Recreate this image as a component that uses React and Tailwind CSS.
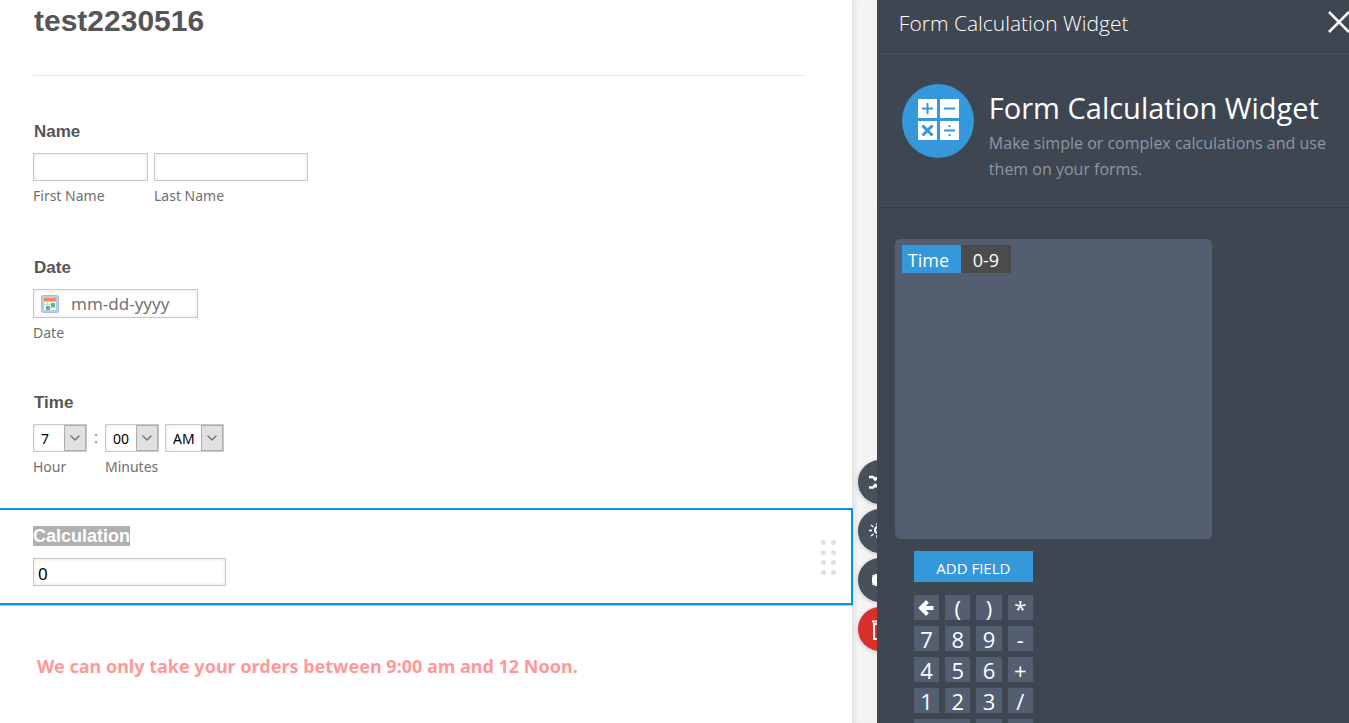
import React from "react";
import { ChevronDown } from "lucide-react";

const box = "border border-[#c8c8c8] bg-white shadow-[inset_0_0_4px_#0000001a] outline-none";

function SubLabel({ htmlFor, children }) {
  return (
    <label htmlFor={htmlFor} className="mt-1.5 block font-['Noto_Sans',sans-serif] text-[14px] leading-[18px] text-[#6f6f6f]">
      {children}
    </label>
  );
}

function Heading({ children }) {
  return <h2 className="mb-2.5 pl-px text-[17px] leading-[22px] font-bold text-[#555]">{children}</h2>;
}

function Picker({ id, width, label, value, options }) {
  return (
    <div className={`relative ${width}`}>
      <select
        id={id}
        aria-label={label}
        defaultValue={value}
        className={`h-7 w-full appearance-none pl-[7px] font-['Noto_Sans',sans-serif] text-[14px] text-black ${box}`}
      >
        {options.map((o) => (
          <option key={o}>{o}</option>
        ))}
      </select>
      <span className="pointer-events-none absolute inset-y-px right-px flex w-[22px] items-center justify-center border border-[#adadad] bg-[#e1e1e1]">
        <ChevronDown size={16} strokeWidth={2} color="#707070" />
      </span>
    </div>
  );
}

function CalendarIcon() {
  return (
    <svg width="18" height="18" viewBox="0 0 18 18" aria-hidden="true">
      <rect x="0.5" y="0.5" width="17" height="17" rx="1.5" fill="#b5cdee" stroke="#a3bfe8" />
      <rect x="3" y="3" width="12" height="12" fill="#fff" />
      <path d="M3 9.500h12M3 12.500h12M6.500 6v9M10.500 6v9" stroke="#c5d6ee" />
      <rect x="3" y="3" width="12" height="3.500" fill="#f58a4b" />
      <rect x="10" y="8" width="4" height="4" fill="#6cb56c" />
      <rect x="5" y="11" width="4" height="4" fill="#6cb56c" />
    </svg>
  );
}

function Tool({ label, color, children }) {
  return (
    <button aria-label={label} className={`flex size-11 shrink-0 items-center justify-center rounded-full shadow-[0_1px_4px_#0003] ${color}`}>
      <svg width="22" height="22" viewBox="0 0 22 22" fill="none" stroke="#fff" strokeWidth="2.5" aria-hidden="true">
        {children}
      </svg>
    </button>
  );
}

function Logo() {
  return (
    <svg className="h-[74px] w-[72px] shrink-0" viewBox="0 0 72 74" aria-hidden="true">
      <ellipse cx="36" cy="37" rx="36" ry="37" fill="#3498db" />
      <path d="M16 15h19v19H16zM38 15h19v19H38zM16 37h19v19H16zM38 37h19v19H38z" fill="#fff" />
      <path d="M20 24.500h11M25.500 19v11M42 24.500h11M42 46.500h11" stroke="#3498db" strokeWidth="2" />
      <path d="M20.500 41.500l10 10M30.500 41.500l-10 10" stroke="#3498db" strokeWidth="3" />
      <path d="M46.500 41h2v2h-2zM46.500 50h2v2h-2z" fill="#3498db" />
    </svg>
  );
}

const keys = ["(", ")", "*", "7", "8", "9", "-", "4", "5", "6", "+", "1", "2", "3", "/"];
const keyClass = "flex h-[25px] items-center justify-center bg-[#535e70] pt-px text-[22px] leading-none text-white";

export default function App() {
  return (
    <div className="flex h-screen overflow-hidden bg-white font-['Liberation_Sans',Arial,sans-serif]">
      <main className="relative z-10 min-w-0 flex-1 bg-white">
        <header className="mr-[47px] ml-[33px] border-b border-[#e3e3e3] pt-1 pb-[37px]">
          <h1 className="pl-px text-[30px] leading-[34px] font-bold text-[#555]">test2230516</h1>
        </header>

        <section className="mt-[45px] ml-[33px]">
          <Heading>Name</Heading>
          <div className="flex gap-1.5">
            <div>
              <input id="first" className={`block h-7 w-[115px] px-1 ${box}`} />
              <SubLabel htmlFor="first">First Name</SubLabel>
            </div>
            <div>
              <input id="last" className={`block h-7 w-[154px] px-1 ${box}`} />
              <SubLabel htmlFor="last">Last Name</SubLabel>
            </div>
          </div>
        </section>

        <section className="mt-[52px] ml-[33px]">
          <Heading>Date</Heading>
          <div className={`flex h-[29px] w-[165px] items-center gap-3 pl-[7px] ${box}`}>
            <CalendarIcon />
            <input
              id="date"
              placeholder="mm-dd-yyyy"
              className="w-[115px] bg-transparent font-['Noto_Sans',sans-serif] text-[17px] leading-5 outline-none placeholder:text-[#757575]"
            />
          </div>
          <SubLabel htmlFor="date">Date</SubLabel>
        </section>

        <section className="mt-[50px] ml-[33px]">
          <Heading>Time</Heading>
          <div className="flex">
            <div>
              <Picker id="hour" width="w-[54px]" value="7" options={["7"]} />
              <SubLabel htmlFor="hour">Hour</SubLabel>
            </div>
            <span className="w-[18px] text-center text-[16px] leading-7 text-[#6f6f6f]">:</span>
            <div>
              <Picker id="minutes" width="w-[54px]" value="00" options={["00"]} />
              <SubLabel htmlFor="minutes">Minutes</SubLabel>
            </div>
            <div className="ml-1.5">
              <Picker id="period" label="AM or PM" width="w-[59px]" value="AM" options={["AM", "PM"]} />
            </div>
          </div>
        </section>

        <section className="mt-8 flex items-center justify-between border-y-2 border-r-2 border-[#0095de] pt-4 pb-[17px] pl-[33px] shadow-[0_1px_0_#0095de66] -mr-px pr-[15px]">
          <div>
            <label htmlFor="calc" className="block w-fit bg-[#b0b0b0] text-[18px] leading-5 font-bold text-white">
              Calculation
            </label>
            <input id="calc" defaultValue="0" className={`mt-3 block h-7 w-[193px] px-1 pt-0.5 font-['Noto_Sans',sans-serif] text-[17px] text-black ${box}`} />
          </div>
          <div className="mt-0.5 grid grid-cols-2 gap-[5px]">
            {Array.from({ length: 8 }, (_, i) => (
              <span key={i} className="size-[5px] rounded-full bg-[#e0e0e0]" />
            ))}
          </div>
        </section>

        <p className="mt-[51px] ml-[37px] font-['Noto_Sans',sans-serif] text-[18px] leading-5 font-bold whitespace-nowrap text-[#ff9999]">
          We can only take your orders between 9:00 am and 12 Noon.
        </p>
      </main>

      <div className="flex w-[25px] shrink-0 flex-col gap-[5px] overflow-hidden bg-[#f4f4f4] pt-[460px] pl-1.5 shadow-[inset_5px_0_5px_-3px_#0000001a]">
        <Tool label="Conditions" color="bg-[#47515b]">
          <path d="M0 6h4l3 3.500M0 16.500h4l3-3.500M7 6v3M7 13.500v3" />
        </Tool>
        <Tool label="Wizard" color="bg-[#47515b]">
          <circle cx="9" cy="10" r="3" strokeWidth="2" />
          <path d="M0 10.500h3M2 5l2.500 2M2 16l2.500-2M8 3v2.500M8 15v3" strokeWidth="1.5" />
        </Tool>
        <Tool label="Settings" color="bg-[#47515b]">
          <path d="M7 5v12M3 9.500h4M3 12.500h4M5 6v10" strokeWidth="3" />
        </Tool>
        <Tool label="Delete" color="bg-[#d9302c]">
          <path d="M3 3.500h16" strokeWidth="2" />
          <path d="M5 6v15h12V6zM10 9v9" strokeWidth="2" />
        </Tool>
      </div>

      <aside className="flex w-[35%] shrink-0 flex-col bg-[#3e4651] font-['Open_Sans',sans-serif]">
        <header className="flex h-[53px] shrink-0 items-start justify-between border-b border-[#343b45] pl-[22px]">
          <h2 className="pt-[9px] text-[21px] leading-7 font-light text-white">Form Calculation Widget</h2>
          <button aria-label="Close" className="mt-[11px] text-white">
            <svg width="22" height="22" viewBox="0 0 22 22" fill="none" stroke="currentColor" strokeWidth="2.500">
              <path d="M2 1l20 20M22 1L2 21" />
            </svg>
          </button>
        </header>
        <section className="flex shrink-0 gap-[15px] border-t border-b border-t-[#4a535f] border-b-[#343b45] pt-[30px] pr-1 pb-[25px] pl-[25px]">
          <Logo />
          <div>
            <h1 className="pt-1.5 text-[29px] leading-9 text-white">Form Calculation Widget</h1>
            <p className="pt-1 text-[16px] leading-[26px] text-[#8d97a5]">Make simple or complex calculations and use them on your forms.</p>
          </div>
        </section>
        <div className="pt-[31px] pl-[18px]">
          <div className="flex h-[300px] w-[317px] items-start rounded-[5px] bg-[#535e70] p-1.5 pl-[7px] text-[18px] leading-7 text-white">
            <span className="h-7 w-[59px] bg-[#3498db] pl-1.5 leading-[30px]">Time</span>
            <span className="h-7 w-[50px] bg-[#4b4b4b] text-center leading-[30px]">0-9</span>
          </div>
          <div className="mt-3 ml-[19px] w-[119px]">
            <button className="block h-[31px] w-full bg-[#3498db] pt-0.5 text-[15px] leading-6 text-white">ADD FIELD</button>
            <div className="mt-[13px] grid grid-cols-4 gap-1.5">
              <button aria-label="Backspace" className="flex h-[25px] items-center justify-center bg-[#535e70]">
                <svg width="16" height="16" viewBox="0 0 16 16" fill="none" stroke="#fff" strokeWidth="4" aria-hidden="true">
                  <path d="M15.500 8H3M9.500 1.500L3 8l6.500 6.500" />
                </svg>
              </button>
              {keys.map((k) => (
                <button key={k} className={keyClass}>
                  {k}
                </button>
              ))}
              <button aria-label="0" className="col-span-2 h-[25px] bg-[#535e70]" />
              <button aria-label="Decimal point" className="h-[25px] bg-[#535e70]" />
              <button aria-label="Clear" className="h-[25px] bg-[#535e70]" />
            </div>
          </div>
        </div>
      </aside>
    </div>
  );
}
